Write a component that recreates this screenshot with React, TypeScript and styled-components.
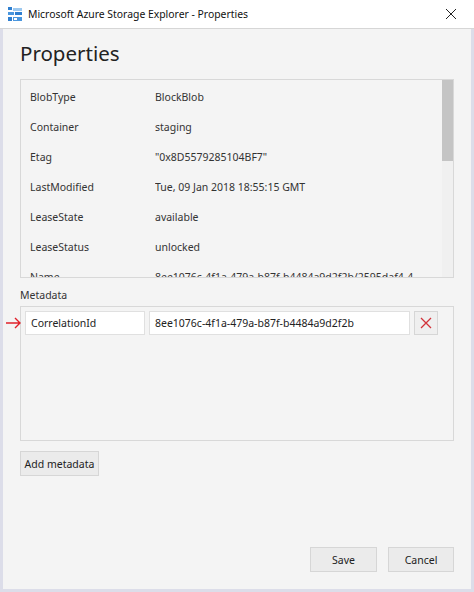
import React from "react";
import styled, { createGlobalStyle } from "styled-components";

const Global = createGlobalStyle`
  html, body { margin: 0; padding: 0; background: #ffffff; }
  * { box-sizing: border-box; }
  body { font-family: "Noto Sans", "Open Sans", sans-serif; }
`;

const Window = styled.div`
  width: 474px;
  height: 592px;
  display: flex;
  flex-direction: column;
  background: #dcdde9;
  padding: 0 3px 3px 3px;
  position: relative;
`;

const TitleBar = styled.div`
  height: 29px;
  margin: 0 -3px;
  background: #ffffff;
  display: flex;
  align-items: center;
  padding-left: 8px;
  border-bottom: 1px solid #d6d6d6;
`;

const TitleText = styled.div`
  font-size: 10.4px;
  color: #111;
  margin-left: 6px;
  flex: 1;
`;

const CloseBtn = styled.div`
  width: 46px;
  height: 29px;
  display: flex;
  align-items: center;
  justify-content: center;
`;

const Body = styled.div`
  flex: 1;
  background: #f4f4f4;
  display: flex;
  flex-direction: column;
  padding: 0 17px 17px 17px;
`;

const Heading = styled.h1`
  margin: 9px 0 0 0;
  font-weight: 400;
  font-size: 20.5px;
  line-height: 30px;
  color: #222;
`;

const PropBox = styled.div`
  margin-top: 11px;
  height: 199px;
  border: 1px solid #d8d8d8;
  position: relative;
  overflow: hidden;
  padding-top: 2px;
`;

const ScrollTrack = styled.div`
  position: absolute;
  top: 0;
  right: 0;
  width: 11px;
  height: 100%;
  background: #f0f0f0;
`;

const ScrollThumb = styled.div`
  width: 11px;
  height: 81px;
  background: #c4c4c4;
`;

const PropRow = styled.div`
  display: flex;
  height: 30px;
  align-items: center;
  font-size: 10.5px;
  color: #333;
  white-space: nowrap;
`;

const PropKey = styled.div`
  width: 134px;
  padding-left: 9px;
  flex-shrink: 0;
`;

const PropVal = styled.div`
  overflow: hidden;
  width: 258px;
`;

const SectionLabel = styled.div`
  margin-top: 8px;
  font-size: 10.5px;
  color: #333;
  line-height: 18px;
`;

const MetaBox = styled.div`
  margin-top: 2px;
  height: 135px;
  border: 1px solid #d8d8d8;
  padding: 4px;
`;

const MetaRow = styled.div`
  display: flex;
  gap: 4px;
  position: relative;
`;

const Input = styled.div<{ $w: number }>`
  width: ${(p) => p.$w}px;
  height: 24px;
  background: #ffffff;
  border: 1px solid #e0e0e0;
  font-size: 10.5px;
  color: #222;
  display: flex;
  align-items: center;
  padding-left: 5px;
  white-space: nowrap;
  overflow: hidden;
`;

const IconButton = styled.div`
  width: 24px;
  height: 24px;
  background: #efefef;
  border: 1px solid #d6d6d6;
  display: flex;
  align-items: center;
  justify-content: center;
`;

const Button = styled.div<{ $w: number }>`
  width: ${(p) => p.$w}px;
  height: 25px;
  background: #ebebeb;
  border: 1px solid #d6d6d6;
  font-size: 10.5px;
  color: #222;
  display: flex;
  align-items: center;
  justify-content: center;
  white-space: nowrap;
`;

const AddRow = styled.div`
  margin-top: 10px;
  display: flex;
`;

const Footer = styled.div`
  margin-top: auto;
  display: flex;
  justify-content: flex-end;
  gap: 11px;
`;

const Arrow = styled.svg`
  position: absolute;
  left: -19px;
  top: 6px;
`;

const rows: [string, string][] = [
  ["BlobType", "BlockBlob"],
  ["Container", "staging"],
  ["Etag", "\"0x8D5579285104BF7\""],
  ["LastModified", "Tue, 09 Jan 2018 18:55:15 GMT"],
  ["LeaseState", "available"],
  ["LeaseStatus", "unlocked"],
  ["Name", "8ee1076c-4f1a-479a-b87f-b4484a9d2f2b/2595daf4-4a3c-4b1e"],
];

function AppIcon() {
  return (
    <svg width="14" height="14" viewBox="0 0 14 14">
      <rect x="0" y="0" width="4" height="3" fill="#2f7fd0" />
      <rect x="5" y="1" width="9" height="3" fill="#9cc8ef" />
      <rect x="0" y="5" width="6" height="3" fill="#4a96de" />
      <rect x="7" y="5" width="7" height="3" fill="#2f7fd0" />
      <rect x="0" y="10" width="4" height="4" fill="#2f7fd0" />
      <rect x="5" y="10" width="9" height="4" fill="#4a96de" />
      <rect x="6" y="11" width="3" height="2" fill="#ffffff" />
    </svg>
  );
}

export default function App() {
  return (
    <>
      <Global />
      <Window>
        <TitleBar>
          <AppIcon />
          <TitleText>Microsoft Azure Storage Explorer - Properties</TitleText>
          <CloseBtn>
            <svg width="10" height="10" viewBox="0 0 10 10">
              <path d="M0 0 L10 10 M10 0 L0 10" stroke="#222" strokeWidth="1" />
            </svg>
          </CloseBtn>
        </TitleBar>
        <Body>
          <Heading>Properties</Heading>
          <PropBox>
            {rows.map(([k, v]) => (
              <PropRow key={k}>
                <PropKey>{k}</PropKey>
                <PropVal>{v}</PropVal>
              </PropRow>
            ))}
            <ScrollTrack>
              <ScrollThumb />
            </ScrollTrack>
          </PropBox>
          <SectionLabel>Metadata</SectionLabel>
          <MetaBox>
            <MetaRow>
              <Arrow width="16" height="12" viewBox="0 0 16 12">
                <path d="M0 6 H14 M9 1 L14 6 L9 11" stroke="#e0202a" strokeWidth="1.4" fill="none" />
              </Arrow>
              <Input $w={120}>CorrelationId</Input>
              <Input $w={261}>8ee1076c-4f1a-479a-b87f-b4484a9d2f2b</Input>
              <IconButton>
                <svg width="12" height="12" viewBox="0 0 12 12">
                  <path d="M1 1 L11 11 M11 1 L1 11" stroke="#d2323a" strokeWidth="1.3" />
                </svg>
              </IconButton>
            </MetaRow>
          </MetaBox>
          <AddRow>
            <Button $w={79}>Add metadata</Button>
          </AddRow>
          <Footer>
            <Button $w={67}>Save</Button>
            <Button $w={66}>Cancel</Button>
          </Footer>
        </Body>
      </Window>
    </>
  );
}
